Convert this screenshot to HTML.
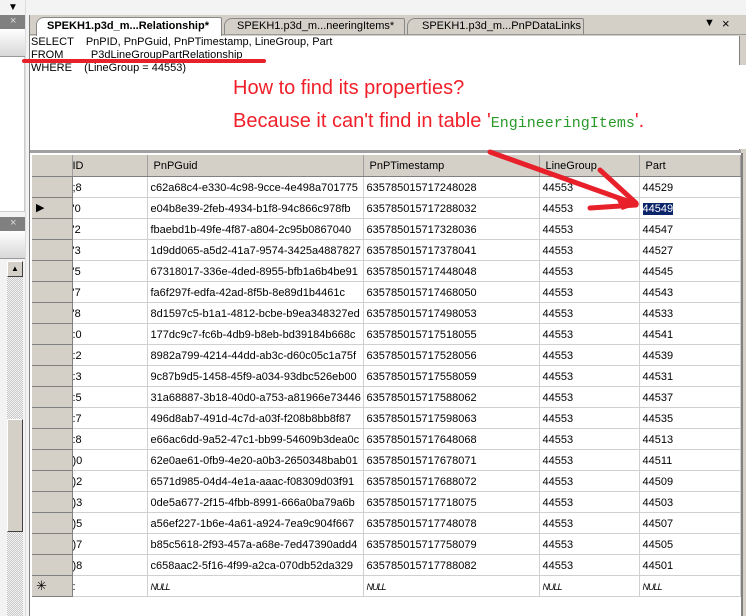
<!DOCTYPE html>
<html><head><style>
*{margin:0;padding:0;box-sizing:border-box}
body{width:746px;height:616px;background:#f3f3f3;position:relative;overflow:hidden;font-family:"Liberation Sans",Tahoma,sans-serif;font-size:11px;color:#000}
.abs{position:absolute}
table{border-collapse:collapse;table-layout:fixed}
td{border-right:1px solid #d0d0d0;border-bottom:1px solid #d0d0d0;height:21px;padding:2px 0 0 3px;white-space:nowrap;overflow:hidden;font-size:11px}
td.rh{background:#d4d0c8;border-right:1px solid #808080;border-bottom:1px solid #808080;border-top:1px solid #fff;padding:0 0 0 4px}
tr.hd td{background:#d4d0c8;border-right:1px solid #a0a0a0;border-bottom:1px solid #808080;padding-left:6px}
i{font-style:italic;font-size:9px;letter-spacing:-1px}
</style></head><body>
<div class="abs" style="left:0;top:0;width:28px;height:616px;background:#f3f3f3"></div>
<div class="abs" style="left:8px;top:2px;font-size:10px;">&#9660;</div>
<div class="abs" style="left:0;top:15px;width:25px;height:14px;background:#808080;color:#ddd;font-size:11px;padding-left:10px;line-height:13px">×</div>
<div class="abs" style="left:0;top:29px;width:25px;height:28px;background:linear-gradient(#fff,#d8d8d8);border-bottom:1px solid #999"></div>
<div class="abs" style="left:0;top:57px;width:25px;height:155px;background:#fff;border-right:1px solid #ccc;border-bottom:1px solid #ccc"></div>
<div class="abs" style="left:0;top:217px;width:25px;height:14px;background:#808080;color:#ddd;font-size:11px;padding-left:10px;line-height:13px">×</div>
<div class="abs" style="left:0;top:231px;width:25px;height:28px;background:linear-gradient(#fff,#d8d8d8);border-bottom:1px solid #999"></div>
<div class="abs" style="left:7px;top:261px;width:16px;height:355px;background:repeating-conic-gradient(#c8c8c8 0 25%,#f4f4f4 0 50%) 0 0/2px 2px"></div>
<div class="abs" style="left:7px;top:261px;width:16px;height:16px;background:#d4d0c8;border:1px solid;border-color:#fff #404040 #404040 #fff;font-size:8px;text-align:center;line-height:13px">&#9650;</div>
<div class="abs" style="left:7px;top:419px;width:16px;height:113px;background:#d4d0c8;border:1px solid;border-color:#fff #404040 #404040 #fff"></div>
<div class="abs" style="left:25px;top:0;width:1px;height:616px;background:#ddd"></div>
<div class="abs" style="left:29px;top:15px;width:717px;height:601px;background:#d4d0c8;border-left:1px solid #808080"></div>
<div class="abs" style="left:30px;top:15px;width:716px;height:20px;background:#d4d0c8;border-bottom:1px solid #999"></div>
<div class="abs" style="left:36px;top:17px;width:186px;height:19px;background:#fff;border:1px solid #888;border-bottom:none;border-radius:8px 2px 0 0;font-weight:bold;font-size:11px;padding:2px 0 0 10px">SPEKH1.p3d_m...Relationship*</div>
<div class="abs" style="left:224px;top:18px;width:181px;height:17px;border:1px solid #888;border-bottom:none;border-radius:8px 2px 0 0;font-size:11px;padding:1px 0 0 12px">SPEKH1.p3d_m...neeringItems*</div>
<div class="abs" style="left:407px;top:18px;width:177px;height:17px;border:1px solid #888;border-bottom:none;border-radius:8px 2px 0 0;font-size:11px;padding:1px 0 0 14px">SPEKH1.p3d_m...PnPDataLinks</div>
<div class="abs" style="left:704px;top:17px;font-size:11px">&#9660;</div>
<div class="abs" style="left:722px;top:16px;font-size:13px">×</div>
<div class="abs" style="left:30px;top:36px;width:710px;height:114px;background:#fff;border-right:1px solid #808080"></div>
<div class="abs" style="left:31px;top:36px;font-size:11px;line-height:13px;white-space:pre">SELECT    PnPID, PnPGuid, PnPTimestamp, LineGroup, Part
FROM         P3dLineGroupPartRelationship
WHERE    (LineGroup = 44553)</div>
<div class="abs" style="left:22px;top:59px;width:244px;height:4px;background:#e8202a;border-radius:2px"></div>
<div class="abs" style="left:225px;top:65px;width:521px;height:84px;background:#fff"></div>
<div class="abs" style="left:233px;top:72px;font-size:20px;color:#f0202a;line-height:33px;white-space:nowrap">How to find its properties?<br>Because it can't find in table '<span style="font-family:'Liberation Mono',monospace;font-size:15px;color:#2a9a2a">EngineeringItems</span>'.</div>
<div class="abs" style="left:30px;top:150px;width:711px;height:3px;background:#a0a0a0"></div>
<div class="abs" style="left:30px;top:153px;width:711px;height:463px;background:#fff"></div>
<table class="abs" style="left:32px;top:155px;width:708px">
<colgroup><col style="width:40px"><col style="width:75px"><col style="width:216px"><col style="width:176px"><col style="width:100px"><col style="width:101px"></colgroup>
<tr class="hd"><td></td><td style="padding-left:0">ID</td><td>PnPGuid</td><td>PnPTimestamp</td><td>LineGroup</td><td>Part</td></tr>
<tr><td class="rh"></td><td style="padding-left:0">;8</td><td>c62a68c4-e330-4c98-9cce-4e498a701775</td><td>635785015717248028</td><td>44553</td><td>44529</td></tr>
<tr><td class="rh">&#9654;</td><td style="padding-left:0">'0</td><td>e04b8e39-2feb-4934-b1f8-94c866c978fb</td><td>635785015717288032</td><td>44553</td><td><span style="background:#0a246a;color:#fff">44549</span></td></tr>
<tr><td class="rh"></td><td style="padding-left:0">'2</td><td>fbaebd1b-49fe-4f87-a804-2c95b0867040</td><td>635785015717328036</td><td>44553</td><td>44547</td></tr>
<tr><td class="rh"></td><td style="padding-left:0">'3</td><td>1d9dd065-a5d2-41a7-9574-3425a4887827</td><td>635785015717378041</td><td>44553</td><td>44527</td></tr>
<tr><td class="rh"></td><td style="padding-left:0">'5</td><td>67318017-336e-4ded-8955-bfb1a6b4be91</td><td>635785015717448048</td><td>44553</td><td>44545</td></tr>
<tr><td class="rh"></td><td style="padding-left:0">'7</td><td>fa6f297f-edfa-42ad-8f5b-8e89d1b4461c</td><td>635785015717468050</td><td>44553</td><td>44543</td></tr>
<tr><td class="rh"></td><td style="padding-left:0">'8</td><td>8d1597c5-b1a1-4812-bcbe-b9ea348327ed</td><td>635785015717498053</td><td>44553</td><td>44533</td></tr>
<tr><td class="rh"></td><td style="padding-left:0">:0</td><td>177dc9c7-fc6b-4db9-b8eb-bd39184b668c</td><td>635785015717518055</td><td>44553</td><td>44541</td></tr>
<tr><td class="rh"></td><td style="padding-left:0">:2</td><td>8982a799-4214-44dd-ab3c-d60c05c1a75f</td><td>635785015717528056</td><td>44553</td><td>44539</td></tr>
<tr><td class="rh"></td><td style="padding-left:0">:3</td><td>9c87b9d5-1458-45f9-a034-93dbc526eb00</td><td>635785015717558059</td><td>44553</td><td>44531</td></tr>
<tr><td class="rh"></td><td style="padding-left:0">:5</td><td>31a68887-3b18-40d0-a753-a81966e73446</td><td>635785015717588062</td><td>44553</td><td>44537</td></tr>
<tr><td class="rh"></td><td style="padding-left:0">:7</td><td>496d8ab7-491d-4c7d-a03f-f208b8bb8f87</td><td>635785015717598063</td><td>44553</td><td>44535</td></tr>
<tr><td class="rh"></td><td style="padding-left:0">:8</td><td>e66ac6dd-9a52-47c1-bb99-54609b3dea0c</td><td>635785015717648068</td><td>44553</td><td>44513</td></tr>
<tr><td class="rh"></td><td style="padding-left:0">)0</td><td>62e0ae61-0fb9-4e20-a0b3-2650348bab01</td><td>635785015717678071</td><td>44553</td><td>44511</td></tr>
<tr><td class="rh"></td><td style="padding-left:0">)2</td><td>6571d985-04d4-4e1a-aaac-f08309d03f91</td><td>635785015717688072</td><td>44553</td><td>44509</td></tr>
<tr><td class="rh"></td><td style="padding-left:0">)3</td><td>0de5a677-2f15-4fbb-8991-666a0ba79a6b</td><td>635785015717718075</td><td>44553</td><td>44503</td></tr>
<tr><td class="rh"></td><td style="padding-left:0">)5</td><td>a56ef227-1b6e-4a61-a924-7ea9c904f667</td><td>635785015717748078</td><td>44553</td><td>44507</td></tr>
<tr><td class="rh"></td><td style="padding-left:0">)7</td><td>b85c5618-2f93-457a-a68e-7ed47390add4</td><td>635785015717758079</td><td>44553</td><td>44505</td></tr>
<tr><td class="rh"></td><td style="padding-left:0">)8</td><td>c658aac2-5f16-4f99-a2ca-070db52da329</td><td>635785015717788082</td><td>44553</td><td>44501</td></tr>
<tr><td class="rh" style="font-size:13px">&#10035;</td><td style="padding-left:0">:</td><td><i>NULL</i></td><td><i>NULL</i></td><td><i>NULL</i></td><td><i>NULL</i></td></tr>
</table>
<div class="abs" style="left:741px;top:153px;width:2px;height:463px;background:#808080"></div>
<svg class="abs" style="left:0;top:0" width="746" height="616">
<g stroke="#e8202a" stroke-linecap="round" fill="none">
<path d="M490 152 L630 202" stroke-width="5"/>
<path d="M590 208 L636 205" stroke-width="5"/>
<path d="M600 170 L636 203" stroke-width="5"/>
</g>
<path d="M640 204 L615 196 L622 210 Z" fill="#e8202a"/>
</svg>
</body></html>
